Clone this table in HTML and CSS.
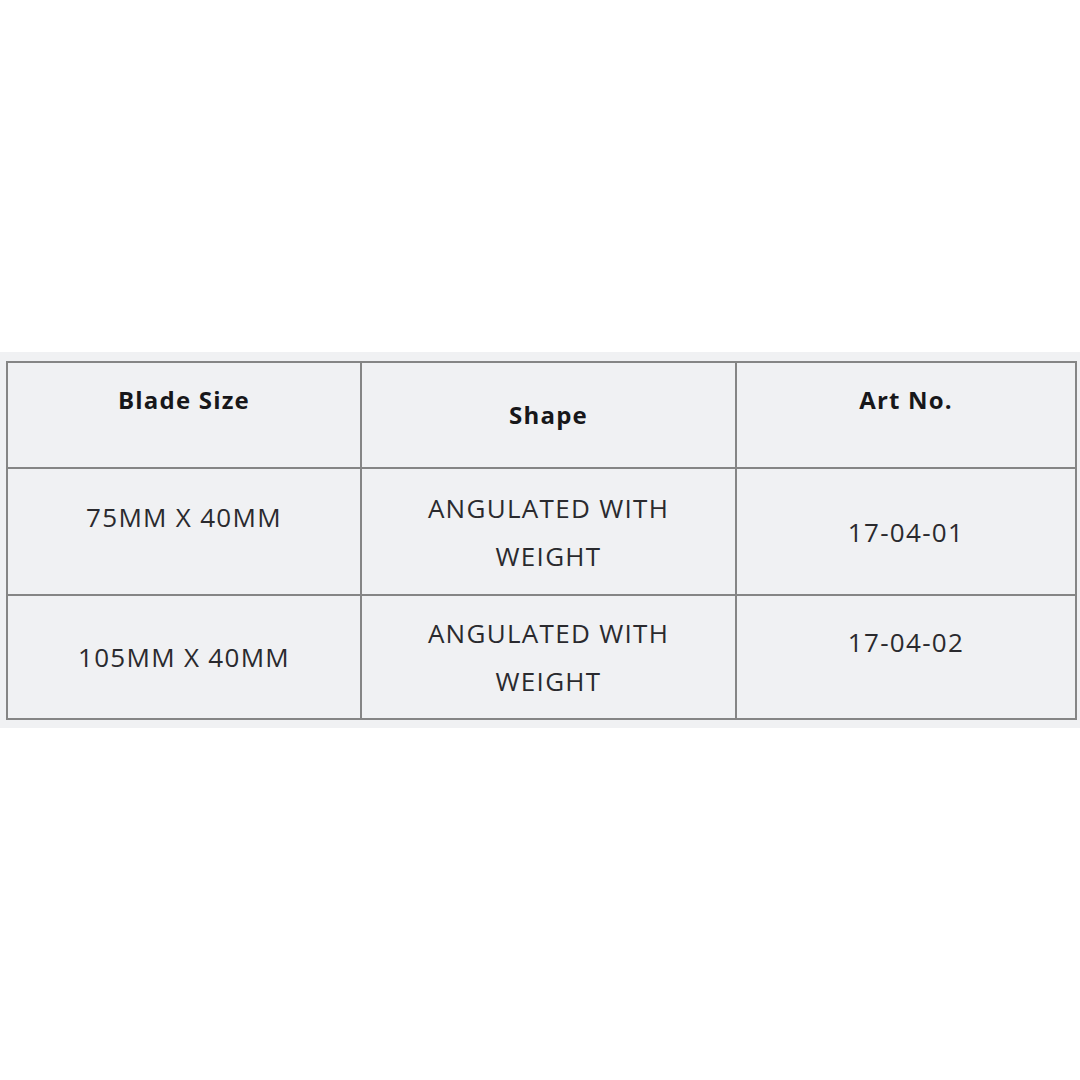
FILE: index.html
```html
<!DOCTYPE html>
<html lang="en">
<head>
<meta charset="utf-8">
<title>Blade sizes</title>
<link rel="stylesheet" href="styles.css">
</head>
<body>
<div class="page">
  <div class="panel">
    <table class="spec">
      <colgroup>
        <col class="c1"><col class="c2"><col class="c3">
      </colgroup>
      <thead>
        <tr class="head">
          <th class="lift">Blade Size</th>
          <th>Shape</th>
          <th class="lift">Art No.</th>
        </tr>
      </thead>
      <tbody>
        <tr class="r1">
          <td class="lift">75MM X 40MM</td>
          <td class="two">ANGULATED WITH<br>WEIGHT</td>
          <td>17-04-01</td>
        </tr>
        <tr class="r2">
          <td>105MM X 40MM</td>
          <td class="two">ANGULATED WITH<br>WEIGHT</td>
          <td class="lift">17-04-02</td>
        </tr>
      </tbody>
    </table>
  </div>
</div>
</body>
</html>
```

FILE: styles.css
```css
html, body {
  margin: 0;
  padding: 0;
  background: #ffffff;
}
.page {
  width: 1080px;
  height: 1080px;
  padding-top: 352px;
  box-sizing: border-box;
}
.panel {
  background: #f0f1f3;
  padding: 9px 5px 8px 6px;
}
.spec {
  width: 1069px;
  border-collapse: collapse;
  font-family: "Open Sans", Lato, sans-serif;
  color: #2a2a2e;
  table-layout: fixed;
}
.c1 { width: 354px; }
.c2 { width: 375px; }
.c3 { width: 340px; }
.spec th, .spec td {
  border: 2px solid #858585;
  text-align: center;
  vertical-align: middle;
  padding: 0;
  line-height: 30px;
}
.spec th {
  font-size: 24px;
  font-weight: 700;
  letter-spacing: 1.2px;
  color: #17171a;
}
.spec td {
  font-size: 26px;
  font-weight: 400;
  letter-spacing: 1.3px;
}
.head { height: 106px; }
.r1 { height: 127px; }
.r2 { height: 124px; }
.spec .two { line-height: 48px; }
.spec .lift { padding-bottom: 30px; }
```
